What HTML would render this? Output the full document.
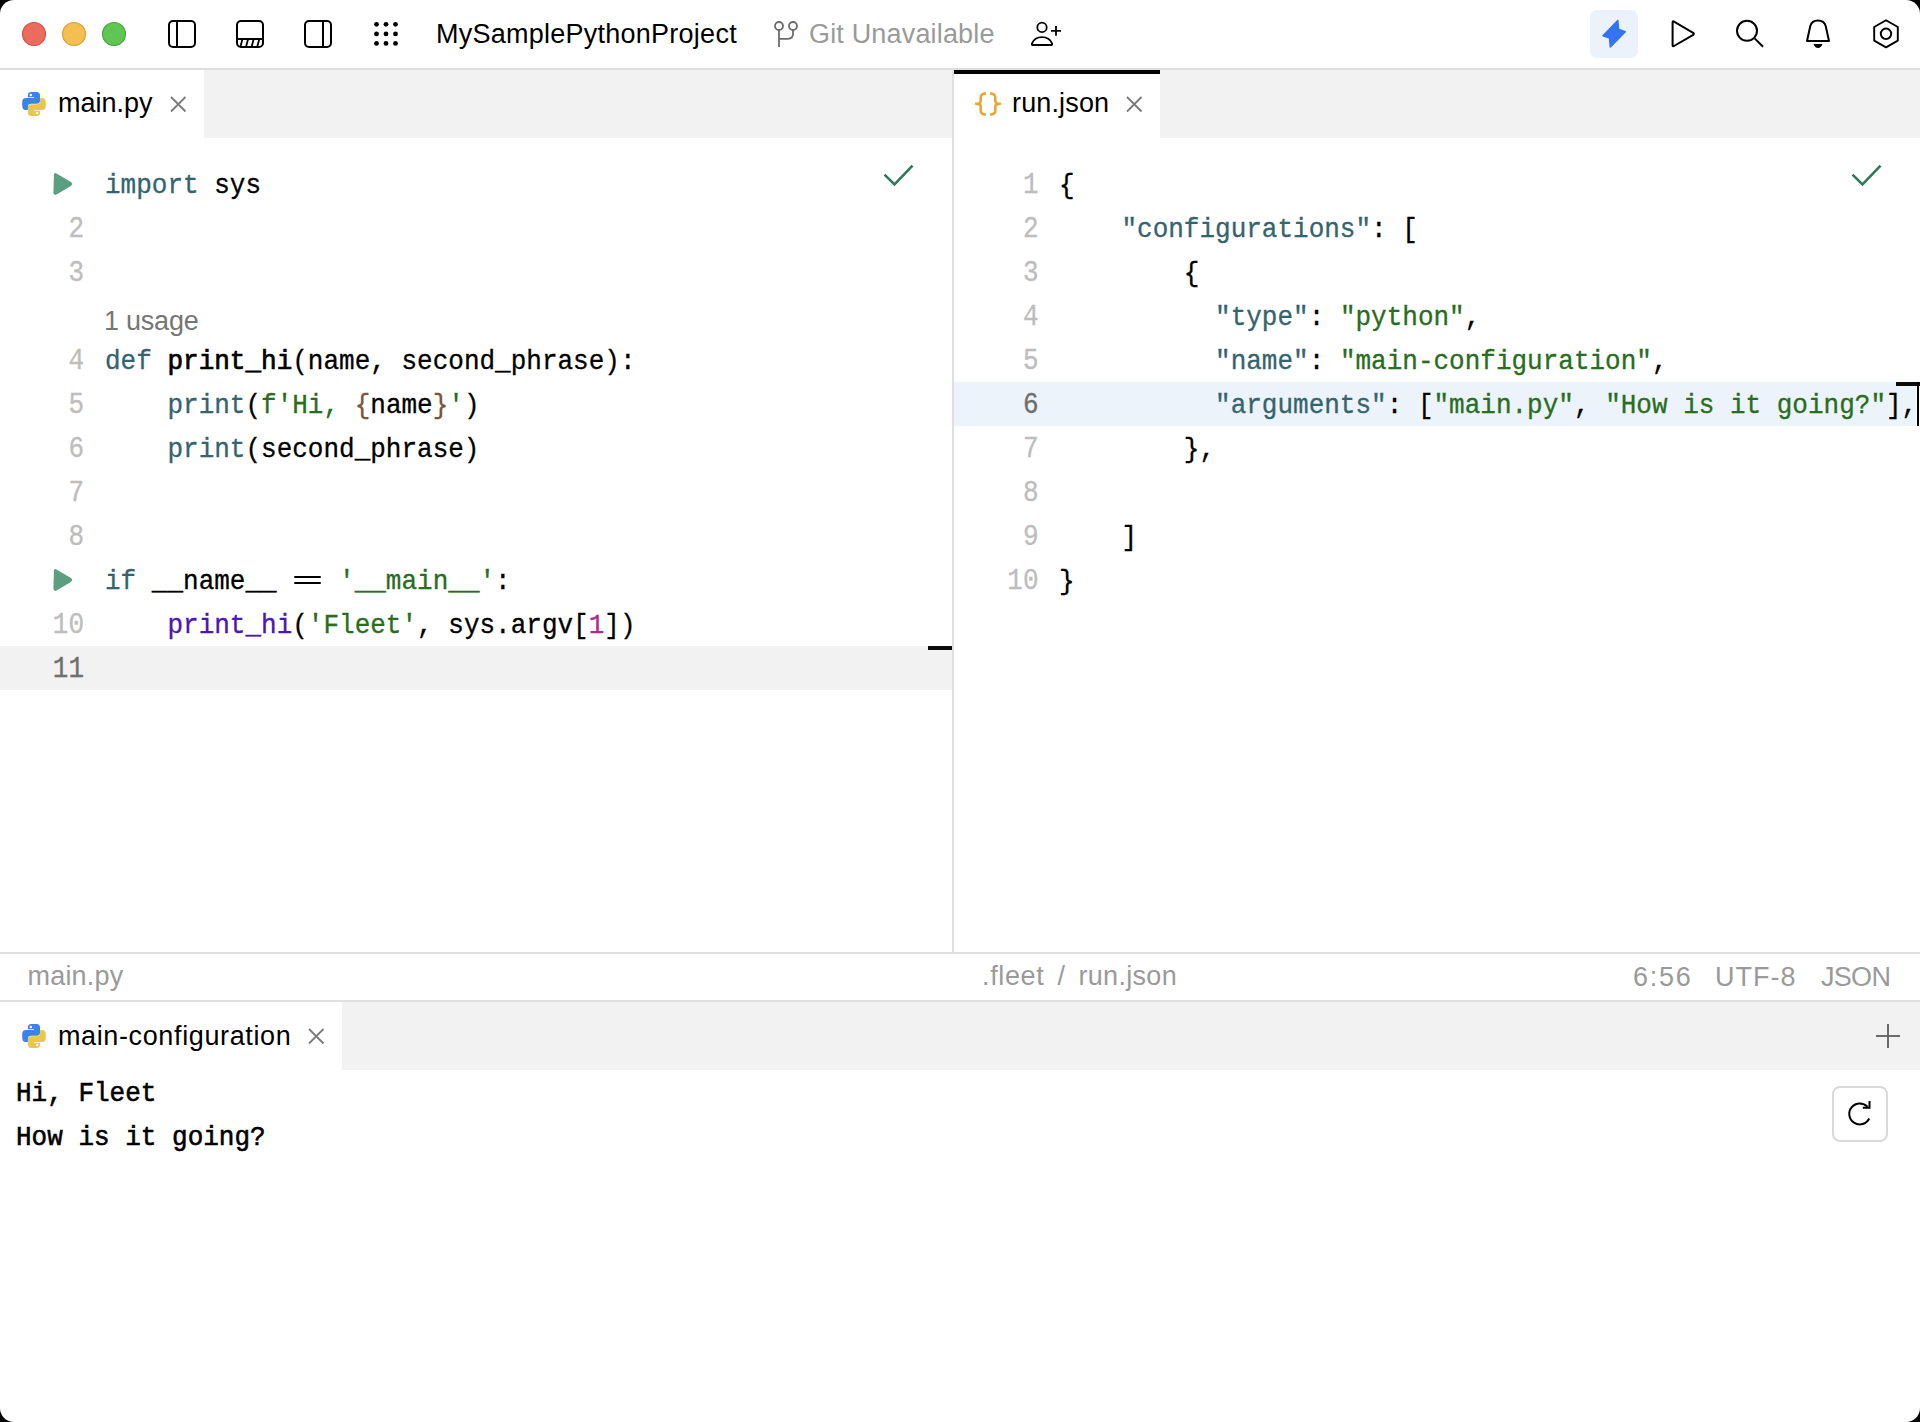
<!DOCTYPE html>
<html><head><meta charset="utf-8">
<style>
*{margin:0;padding:0;box-sizing:border-box}
html,body{width:1920px;height:1422px;overflow:hidden;background:#000}
#win{position:absolute;left:0;top:0;width:1920px;height:1422px;background:#fff;border-radius:14px;overflow:hidden}
.a{position:absolute}
.ui{position:absolute;font-family:"Liberation Sans",sans-serif;font-size:27px;line-height:27px;white-space:pre;color:#000}
.cd{position:absolute;font-family:"Liberation Mono",monospace;font-size:26px;line-height:26px;white-space:pre;color:#000;transform-origin:0 20px;transform:scaleY(1.04);-webkit-text-stroke:0.3px currentColor}
.cd span{-webkit-text-stroke:0.3px currentColor}
.ln{position:absolute;font-family:"Liberation Mono",monospace;font-size:26px;line-height:26px;white-space:pre;color:#bdbdbd;text-align:right;transform-origin:0 20px;transform:scaleY(1.1);-webkit-text-stroke:0.3px currentColor}
.kw{color:#34646e}
.st{color:#286d20}
.br{color:#7a5536}
.fn{color:#4b17b5}
.nm{color:#b02a8b}
.tm{-webkit-text-stroke:0.55px currentColor}
.bd{-webkit-text-stroke:0.7px currentColor !important}
svg{position:absolute;overflow:visible}
</style></head>
<body>
<div id="win">
<!-- ================= TITLE BAR ================= -->
<div class="a" style="left:0;top:68px;width:1920px;height:2px;background:#dedede"></div>
<svg style="left:0;top:0" width="140" height="68">
  <circle cx="34" cy="34" r="11.5" fill="#ed6a5e" stroke="#cf4f43" stroke-width="1.1"/>
  <circle cx="74" cy="34" r="11.5" fill="#f5bf4f" stroke="#d69e2e" stroke-width="1.1"/>
  <circle cx="114" cy="34" r="11.5" fill="#61c554" stroke="#3fa53a" stroke-width="1.1"/>
</svg>
<svg style="left:0;top:0" width="420" height="68" fill="none" stroke="#000" stroke-width="2">
  <rect x="169" y="21" width="26" height="26" rx="4"/>
  <line x1="177" y1="21" x2="177" y2="47"/>
  <rect x="237" y="21" width="26" height="26" rx="4"/>
  <line x1="237" y1="39" x2="263" y2="39"/>
  <path d="M240.5 46.5 L242.3 39.5 M246.1 46.5 L248 39.5 M251.7 46.5 L253.6 39.5 M257.3 46.5 L259.2 39.5" stroke-width="1.8"/>
  <rect x="305" y="21" width="26" height="26" rx="4"/>
  <line x1="323" y1="21" x2="323" y2="47"/>
  <g fill="#000" stroke="none">
    <circle cx="376.5" cy="24.3" r="2.4"/><circle cx="386" cy="24.3" r="2.4"/><circle cx="395.5" cy="24.3" r="2.4"/>
    <circle cx="376.5" cy="33.9" r="2.4"/><circle cx="386" cy="33.9" r="2.4"/><circle cx="395.5" cy="33.9" r="2.4"/>
    <circle cx="376.5" cy="43.4" r="2.4"/><circle cx="386" cy="43.4" r="2.4"/><circle cx="395.5" cy="43.4" r="2.4"/>
  </g>
</svg>
<div class="ui" style="left:436px;top:21px;letter-spacing:0.25px">MySamplePythonProject</div>
<svg style="left:0;top:0" width="1100" height="68" fill="none" stroke="#6b6b6b" stroke-width="1.8">
  <circle cx="779" cy="26" r="4"/>
  <circle cx="793" cy="26" r="4"/>
  <path d="M779 30 V47 M779 38.8 H788 Q793 38.8 793 33.8 V30"/>
</svg>
<div class="ui" style="left:809px;top:21px;color:#9a9a9a;letter-spacing:0.17px">Git Unavailable</div>
<svg style="left:0;top:0" width="1100" height="68" fill="none" stroke="#000" stroke-width="1.8">
  <circle cx="1042" cy="27.4" r="4.7"/>
  <path d="M1032.8 45 H1051.2 Q1052.6 45 1052.1 43.6 Q1049.5 37.1 1042 37.1 Q1034.5 37.1 1031.9 43.6 Q1031.4 45 1032.8 45 Z" stroke-linejoin="round"/>
  <path d="M1056 26 V35.8 M1051 30.9 H1061"/>
</svg>
<!-- right icons -->
<div class="a" style="left:1590px;top:10px;width:48px;height:48px;border-radius:7px;background:#ebf2fc"></div>
<svg style="left:0;top:0" width="1920" height="68">
  <path d="M1617.8 20.6 L1603 35.8 L1609.5 38 L1610.4 47 L1625.2 31.7 L1618.5 29.2 Z" fill="#3574f0" stroke="#3574f0" stroke-width="1.6" stroke-linejoin="round"/>
  <path d="M1672.6 22.5 V45.2 Q1672.6 46.8 1674 46 L1693.2 34.9 Q1694.5 33.8 1693.2 32.8 L1674 21.6 Q1672.6 20.8 1672.6 22.5 Z" fill="none" stroke="#000" stroke-width="2" stroke-linejoin="round"/>
  <g fill="none" stroke="#000" stroke-width="2">
    <circle cx="1747" cy="30.8" r="10"/>
    <path d="M1754.6 38.4 L1763 46.8"/>
    <path d="M1807 41 L1810.3 26 Q1811.8 20.5 1818 20.5 Q1824.2 20.5 1825.7 26 L1829 41 Z" stroke-linejoin="round"/>
    <path d="M1886 20.2 L1897.8 27 V40.6 L1886 47.4 L1874.2 40.6 V27 Z" stroke-linejoin="round" stroke-width="1.9"/>
    <circle cx="1886" cy="33.8" r="5.2"/>
  </g>
  <path d="M1813.5 44 H1822.5 Q1821 48 1818 48 Q1815 48 1813.5 44 Z" fill="#000"/>
</svg>

<!-- ================= TAB BARS ================= -->
<div class="a" style="left:0;top:70px;width:1920px;height:68px;background:#f2f2f2"></div>
<div class="a" style="left:0;top:70px;width:204px;height:68px;background:#fff"></div>
<div class="a" style="left:954px;top:70px;width:206px;height:68px;background:#fff"></div>
<div class="a" style="left:954px;top:70px;width:206px;height:4px;background:#000"></div>
<div class="a" style="left:952px;top:70px;width:2px;height:884px;background:#e0e0e0"></div>

<svg style="left:22px;top:92px" width="24" height="24" viewBox="0 0 24 24">
  <path d="M9.5 0H14.5Q18 0 18 3.5V8.5Q18 11.8 14.8 11.8H9.2Q5.9 11.8 5.9 15V18H3.8Q0.2 18 0.2 13.5V10.2Q0.2 6 4 6H12V5.3H5.9V3Q5.9 0 9.5 0ZM8.8 1.8A1.25 1.25 0 1 0 8.8 4.3A1.25 1.25 0 1 0 8.8 1.8Z" fill="#3d82e9" fill-rule="evenodd"/>
  <path d="M9.5 0H14.5Q18 0 18 3.5V8.5Q18 11.8 14.8 11.8H9.2Q5.9 11.8 5.9 15V18H3.8Q0.2 18 0.2 13.5V10.2Q0.2 6 4 6H12V5.3H5.9V3Q5.9 0 9.5 0ZM8.8 1.8A1.25 1.25 0 1 0 8.8 4.3A1.25 1.25 0 1 0 8.8 1.8Z" fill="#e9c74a" fill-rule="evenodd" transform="rotate(180 12 12)"/>
</svg>
<div class="ui" style="left:58px;top:90px">main.py</div>
<svg style="left:0;top:0" width="200" height="140" fill="none" stroke="#7a7a7a" stroke-width="1.8">
  <path d="M171 97 L185.5 111.5 M185.5 97 L171 111.5"/>
</svg>

<svg style="left:0;top:0" width="1010" height="140" fill="none" stroke="#e8a633" stroke-width="2.6" stroke-linejoin="round">
  <path d="M986 93.5 Q980.7 93.5 980.7 97.5 V101 Q980.7 103.8 976 103.8 Q980.7 103.8 980.7 106.6 V110.5 Q980.7 114.5 986 114.5"/>
  <path d="M990 93.5 Q995.3 93.5 995.3 97.5 V101 Q995.3 103.8 1000 103.8 Q995.3 103.8 995.3 106.6 V110.5 Q995.3 114.5 990 114.5"/>
</svg>
<div class="ui" style="left:1012px;top:90px;letter-spacing:0.15px">run.json</div>
<svg style="left:0;top:0" width="1200" height="140" fill="none" stroke="#7a7a7a" stroke-width="1.8">
  <path d="M1127 97 L1141.5 111.5 M1141.5 97 L1127 111.5"/>
</svg>

<!-- ================= LEFT EDITOR ================= -->
<div class="a" style="left:0;top:646px;width:952px;height:44px;background:#f2f2f2"></div>
<div class="a" style="left:928px;top:646px;width:24px;height:4px;background:#0d0d0d"></div>
<svg style="left:0;top:0" width="100" height="700">
  <path d="M54.5 175.5 Q54 173 56.2 174 L70.6 182.5 Q72.4 184 70.6 185.4 L56.2 193.9 Q54 195 54 192.5 Z" fill="#5b9f82" stroke="#5b9f82" stroke-width="1.2" stroke-linejoin="round"/>
  <path d="M54.5 571.5 Q54 569 56.2 570 L70.6 578.5 Q72.4 580 70.6 581.4 L56.2 589.9 Q54 591 54 588.5 Z" fill="#5b9f82" stroke="#5b9f82" stroke-width="1.2" stroke-linejoin="round"/>
</svg>
<svg style="left:0;top:0" width="952" height="200" fill="none" stroke="#2f7a5a" stroke-width="2.6">
  <path d="M884.5 174.6 L894.5 184.4 L912.5 165.6"/>
</svg>

<div class="ln" style="left:0;width:84px;top:217px">2</div>
<div class="ln" style="left:0;width:84px;top:261px">3</div>
<div class="ln" style="left:0;width:84px;top:349px">4</div>
<div class="ln" style="left:0;width:84px;top:393px">5</div>
<div class="ln" style="left:0;width:84px;top:437px">6</div>
<div class="ln" style="left:0;width:84px;top:481px">7</div>
<div class="ln" style="left:0;width:84px;top:525px">8</div>
<div class="ln" style="left:0;width:84px;top:613px">10</div>
<div class="ln" style="left:0;width:84px;top:657px;color:#6e6e6e">11</div>

<div class="cd" style="left:105px;top:173px"><span class="kw">import</span> sys</div>
<div class="ui" style="left:104px;top:308px;color:#767676;letter-spacing:-0.23px">1 usage</div>
<div class="cd" style="left:105px;top:349px"><span class="kw">def</span> <span class="bd">print_hi</span>(name, second_phrase):</div>
<div class="cd" style="left:105px;top:393px">    <span class="kw">print</span>(<span class="st">f'Hi, </span><span class="br">{</span>name<span class="br">}</span><span class="st">'</span>)</div>
<div class="cd" style="left:105px;top:437px">    <span class="kw">print</span>(second_phrase)</div>
<div class="cd" style="left:105px;top:569px"><span class="kw">if</span> __name__    <span class="st">'__main__'</span>:</div>
<div class="cd" style="left:105px;top:613px">    <span class="fn">print_hi</span>(<span class="st">'Fleet'</span>, sys.argv[<span class="nm">1</span>])</div>

<div class="a" style="left:294.3px;top:576px;width:26.8px;height:2.3px;border-radius:1px;background:#000"></div>
<div class="a" style="left:294.3px;top:582.2px;width:26.8px;height:2.3px;border-radius:1px;background:#000"></div>
<!-- ================= RIGHT EDITOR ================= -->
<div class="a" style="left:954px;top:382px;width:962px;height:44px;background:#edf3fb"></div>
<div class="a" style="left:1896px;top:382px;width:24px;height:4px;background:#0d0d0d"></div>
<div class="a" style="left:1917px;top:382px;width:2px;height:44px;background:#000"></div>
<svg style="left:0;top:0" width="1920" height="200" fill="none" stroke="#2f7a5a" stroke-width="2.6">
  <path d="M1852.5 174.6 L1862.5 184.4 L1880.5 165.6"/>
</svg>
<div class="ln" style="left:960px;width:78.5px;top:173px">1</div>
<div class="ln" style="left:960px;width:78.5px;top:217px">2</div>
<div class="ln" style="left:960px;width:78.5px;top:261px">3</div>
<div class="ln" style="left:960px;width:78.5px;top:305px">4</div>
<div class="ln" style="left:960px;width:78.5px;top:349px">5</div>
<div class="ln" style="left:960px;width:78.5px;top:393px;color:#6e6e6e">6</div>
<div class="ln" style="left:960px;width:78.5px;top:437px">7</div>
<div class="ln" style="left:960px;width:78.5px;top:481px">8</div>
<div class="ln" style="left:960px;width:78.5px;top:525px">9</div>
<div class="ln" style="left:960px;width:78.5px;top:569px">10</div>

<div class="cd" style="left:1059px;top:173px">{</div>
<div class="cd" style="left:1059px;top:217px">    <span class="kw">"configurations"</span>: [</div>
<div class="cd" style="left:1059px;top:261px">        {</div>
<div class="cd" style="left:1059px;top:305px">          <span class="kw">"type"</span>: <span class="st">"python"</span>,</div>
<div class="cd" style="left:1059px;top:349px">          <span class="kw">"name"</span>: <span class="st">"main-configuration"</span>,</div>
<div class="cd" style="left:1059px;top:393px">          <span class="kw">"arguments"</span>: [<span class="st">"main.py"</span>, <span class="st">"How is it going?"</span>],</div>
<div class="cd" style="left:1059px;top:437px">        },</div>
<div class="cd" style="left:1059px;top:525px">    ]</div>
<div class="cd" style="left:1059px;top:569px">}</div>

<!-- ================= STATUS BAR ================= -->
<div class="a" style="left:0;top:952px;width:1920px;height:2px;background:#e0e0e0"></div>
<div class="a" style="left:0;top:1000px;width:1920px;height:2px;background:#e0e0e0"></div>
<div class="ui" style="left:27.5px;top:963px;color:#9a9a9a;letter-spacing:0.2px">main.py</div>
<div class="ui" style="left:982px;top:963px;color:#9a9a9a;letter-spacing:0.65px">.fleet</div>
<div class="ui" style="left:1057.5px;top:963px;color:#9a9a9a">/</div>
<div class="ui" style="left:1078.5px;top:963px;color:#9a9a9a;letter-spacing:0.3px">run.json</div>
<div class="ui" style="left:1633px;top:964px;color:#9a9a9a;letter-spacing:1.7px">6:56</div>
<div class="ui" style="left:1715px;top:964px;color:#9a9a9a;letter-spacing:1px">UTF-8</div>
<div class="ui" style="left:1821px;top:964px;color:#9a9a9a;letter-spacing:-0.7px">JSON</div>

<!-- ================= BOTTOM PANEL ================= -->
<div class="a" style="left:0;top:1002px;width:1920px;height:68px;background:#f2f2f2"></div>
<div class="a" style="left:0;top:1002px;width:342px;height:68px;background:#fff"></div>
<svg style="left:22px;top:1024px" width="24" height="24" viewBox="0 0 24 24">
  <path d="M9.5 0H14.5Q18 0 18 3.5V8.5Q18 11.8 14.8 11.8H9.2Q5.9 11.8 5.9 15V18H3.8Q0.2 18 0.2 13.5V10.2Q0.2 6 4 6H12V5.3H5.9V3Q5.9 0 9.5 0ZM8.8 1.8A1.25 1.25 0 1 0 8.8 4.3A1.25 1.25 0 1 0 8.8 1.8Z" fill="#3d82e9" fill-rule="evenodd"/>
  <path d="M9.5 0H14.5Q18 0 18 3.5V8.5Q18 11.8 14.8 11.8H9.2Q5.9 11.8 5.9 15V18H3.8Q0.2 18 0.2 13.5V10.2Q0.2 6 4 6H12V5.3H5.9V3Q5.9 0 9.5 0ZM8.8 1.8A1.25 1.25 0 1 0 8.8 4.3A1.25 1.25 0 1 0 8.8 1.8Z" fill="#e9c74a" fill-rule="evenodd" transform="rotate(180 12 12)"/>
</svg>
<div class="ui" style="left:58px;top:1023px;letter-spacing:0.62px">main-configuration</div>
<svg style="left:0;top:0" width="1920" height="1160" fill="none" stroke="#7a7a7a" stroke-width="1.8">
  <path d="M309 1029 L323.5 1043.5 M323.5 1029 L309 1043.5"/>
  <path d="M1888 1024 V1048 M1876 1036 H1900" stroke="#6b6b6b" stroke-width="2"/>
</svg>
<div class="cd tm" style="left:16px;top:1081px">Hi, Fleet</div>
<div class="cd tm" style="left:16px;top:1125px">How is it going?</div>
<div class="a" style="left:1832px;top:1086px;width:56px;height:56px;border:2px solid #d9d9d9;border-radius:8px"></div>
<svg style="left:0;top:0" width="1920" height="1160" fill="none" stroke="#000" stroke-width="2">
  <path d="M1869.2 1118.5 A10.5 10.5 0 1 1 1867.5 1106.8"/>
  <path d="M1862.8 1107.8 H1869.5 V1101" />
</svg>
</div>
</body></html>
